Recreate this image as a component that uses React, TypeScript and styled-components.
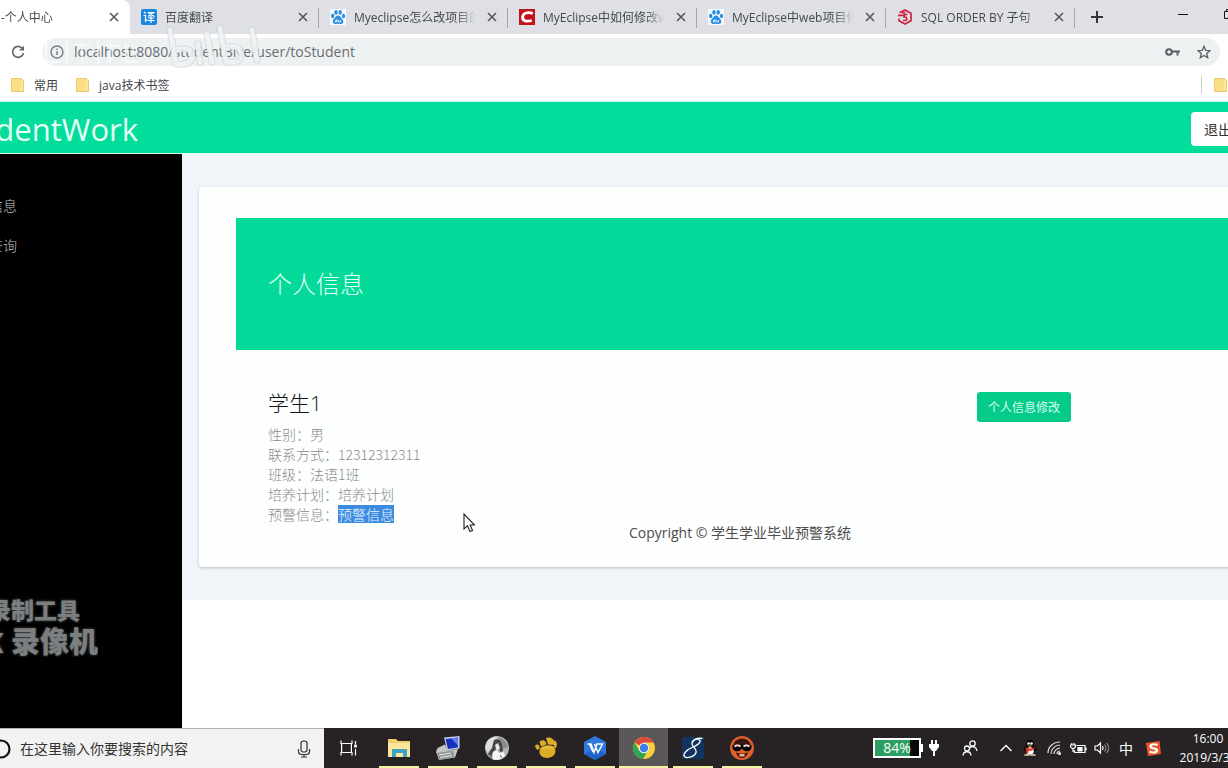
import React from "react";
import styled, { createGlobalStyle } from "styled-components";

const sans = `"Open Sans", "Noto Sans CJK SC", sans-serif`;

const GlobalStyle = createGlobalStyle`
  * { box-sizing: border-box; }
  body { margin: 0; background: #fff; font-family: ${sans}; font-size: 14px; color: #333; }
  button, input { font-family: inherit; }
  a { color: inherit; text-decoration: none; }
  svg { display: block; flex: none; }
`;

const Screen = styled.div`
  position: relative;
  display: flex;
  flex-direction: column;
  min-height: 100vh;
  overflow: hidden;
`;

/* ---------- browser chrome ---------- */

const TabStrip = styled.div`
  display: flex;
  height: 34px;
  background: #dee0e6;
`;

const TabItem = styled.div<{ $active?: boolean }>`
  position: relative;
  display: flex;
  align-items: center;
  gap: 8px;
  flex: none;
  width: ${(p) => (p.$active ? 130 : 189)}px;
  padding: ${(p) => (p.$active ? "0 8px 0 1px" : "0 8px 0 11px")};
  background: ${(p) => (p.$active ? "#fff" : "transparent")};
  border-radius: ${(p) => (p.$active ? "0 8px 0 0" : "0")};
  font-size: 12px;
  color: #45484d;

  &::after {
    content: "";
    position: absolute;
    right: 0;
    top: 8px;
    height: 20px;
    width: 1px;
    background: ${(p) => (p.$active ? "transparent" : "#a3a6ab")};
  }
`;

const TabTitle = styled.span`
  flex: 1;
  min-width: 0;
  overflow: hidden;
  white-space: nowrap;
  mask-image: linear-gradient(to right, #000 calc(100% - 20px), transparent);
`;

const IconButton = styled.button`
  display: flex;
  align-items: center;
  justify-content: center;
  flex: none;
  width: 16px;
  height: 16px;
  padding: 0;
  border: 0;
  background: none;
  color: #55585c;
`;

const NewTab = styled(IconButton)`
  width: 44px;
  height: 34px;
`;

const WindowControls = styled.div`
  display: flex;
  gap: 30px;
  margin-left: auto;
  margin-right: -9px;
  padding-top: 6px;
`;

const AddressRow = styled.div`
  display: flex;
  align-items: center;
  gap: 16px;
  height: 34px;
  padding: 4px 8px 2px 10px;
  margin-bottom: 1px;
`;

const AddressPill = styled.div`
  display: flex;
  align-items: center;
  flex: 1;
  height: 28px;
  padding: 0 8px;
  gap: 16px;
  border-radius: 14px;
  background: #eef1f2;
`;

const AddressField = styled.label`
  display: flex;
  align-items: center;
  flex: 1;
  gap: 10px;
`;

const AddressInput = styled.input`
  flex: 1;
  min-width: 0;
  padding: 0;
  border: 0;
  background: none;
  font-size: 14px;
  line-height: 20px;
  color: #6a6e72;
`;

const BookmarkBar = styled.nav`
  display: flex;
  align-items: center;
  height: 33px;
  padding-left: 11px;
  gap: 18px;
  border-bottom: 1px solid #c9f7f2;
  font-size: 12px;
  color: #3f4246;
`;

const Bookmark = styled.a`
  display: flex;
  align-items: center;
  gap: 10px;
`;

const OtherBookmarks = styled.div`
  display: flex;
  align-items: center;
  height: 18px;
  margin-left: auto;
  margin-right: 1px;
  padding-left: 12px;
  border-left: 1px solid #d0d0c8;
`;

/* ---------- web page ---------- */

const SiteHeader = styled.header`
  display: flex;
  align-items: center;
  justify-content: space-between;
  height: 52px;
  padding-top: 2px;
  background: #02dd9b;
  border-bottom: 1px solid #d8fbef;
  overflow: hidden;
`;

const ClippedLeft = styled.div<{ $width: number }>`
  display: flex;
  justify-content: flex-end;
  width: ${(p) => p.$width}px;
  overflow: hidden;
  white-space: nowrap;
`;

const Brand = styled(ClippedLeft)`
  font-size: 31px;
  font-weight: 500;
  line-height: 48px;
  color: #e4fff6;
`;

const LogoutButton = styled.button`
  flex: none;
  height: 34px;
  margin-right: -17px;
  padding: 0 13px;
  border: 0;
  border-radius: 4px;
  background: #fff;
  font-size: 14px;
  color: #333;
`;

const Body = styled.div`
  display: flex;
  flex: 1;
  align-items: stretch;
`;

const Sidebar = styled.aside`
  position: relative;
  flex: none;
  width: 182px;
  padding-top: 32px;
  background: #000;
`;

const SideLink = styled.a`
  display: block;
  color: #c4c4c4;
  font-size: 14px;
  font-weight: 300;
  line-height: 40px;
`;

const RecorderMark = styled.div`
  position: absolute;
  left: 0;
  top: 441px;
  color: #7b7f80;
  font-weight: 900;
  text-shadow: 0 0 3px #55585a;
`;

const MarkLine = styled(ClippedLeft)<{ $size: number }>`
  font-size: ${(p) => p.$size}px;
  line-height: 31px;
`;

const Main = styled.main`
  flex: 1;
  min-width: 0;
  overflow: hidden;
`;

const Backdrop = styled.div`
  padding: 33px 0 33px 17px;
  background: #f1f4f9;
`;

const Card = styled.section`
  height: 380px;
  margin-right: -53px;
  padding: 31px 37px 24px;
  background: #fdfefe;
  border-radius: 3px;
  box-shadow: 0 1px 3px rgba(0, 0, 0, 0.22);
`;

const Banner = styled.div`
  display: flex;
  align-items: center;
  height: 132px;
  padding: 0 0 4px 32px;
  background: #03da9a;
`;

const BannerTitle = styled.h1`
  margin: 0;
  font-size: 24px;
  font-weight: 300;
  color: #e2fff6;
`;

const Profile = styled.div`
  display: flex;
  justify-content: space-between;
  align-items: flex-start;
  padding: 38px 173px 0 32px;
`;

const Name = styled.h2`
  margin: 0 0 6px;
  font-size: 21px;
  line-height: 30px;
  font-weight: 300;
  color: #111;
`;

const Facts = styled.div`
  font-family: "Liberation Sans Narrow", "Noto Sans CJK SC", sans-serif;
  font-size: 14px;
  font-weight: 300;
  line-height: 20px;
  color: #8b8b8b;
`;

const Fact = styled.div`
  display: flex;
  height: 20px;
`;

const Selected = styled.mark`
  height: 18px;
  margin-top: 1px;
  line-height: 18px;
  background: #3d8be0;
  color: #e6f3ff;
`;

const EditButton = styled.button`
  height: 30px;
  margin-top: 4px;
  padding: 0 11px;
  border: 0;
  border-radius: 3px;
  background: #04cb8a;
  color: #d5fff1;
  font-size: 12px;
`;

const Copyright = styled.footer`
  text-align: center;
  font-size: 14px;
  line-height: 18px;
  color: #4c4c4c;
`;

/* ---------- taskbar ---------- */

const Taskbar = styled.div`
  display: flex;
  height: 40px;
  background: #272325;
  color: #fff;
`;

const SearchBox = styled.label`
  display: flex;
  align-items: center;
  flex: none;
  width: 324px;
  padding: 0 13px 0 0;
  gap: 9px;
  border-top: 1px solid #b3b3b3;
  background: #f2f2f2;
  color: #222;
`;

const SearchInput = styled.input`
  flex: 1;
  min-width: 0;
  padding: 0;
  border: 0;
  background: none;
  font-size: 14px;
  &::placeholder { color: #333; opacity: 1; }
`;

const TaskButton = styled.button<{ $open?: boolean; $active?: boolean }>`
  position: relative;
  display: flex;
  align-items: center;
  justify-content: center;
  flex: none;
  width: 49px;
  padding: 0;
  border: 0;
  background: ${(p) => (p.$active ? "#5a5759" : "transparent")};

  &::after {
    content: "";
    position: absolute;
    left: ${(p) => (p.$active ? 0 : 5)}px;
    right: ${(p) => (p.$active ? 0 : 4)}px;
    bottom: 0;
    height: 2px;
    background: ${(p) => (p.$open ? "#f5f2a8" : "transparent")};
  }
`;

const AppButtons = styled.div`
  display: flex;
  margin-left: 1px;
`;

const Tray = styled.div`
  display: flex;
  align-items: center;
  margin-left: auto;
  margin-right: -9px;
`;

const TrayCell = styled.div<{ $width?: number }>`
  display: flex;
  justify-content: center;
  flex: none;
  width: ${(p) => p.$width ?? 24}px;
  font-size: 14px;
`;

const Battery = styled.div`
  position: relative;
  width: 48px;
  height: 20px;
  margin-right: 1px;
  border: 2px solid #fff;
  background: linear-gradient(to right, #2b9f63 80%, #0a0a0a 80%);
  font-size: 14px;
  line-height: 16px;
  text-align: center;

  &::after {
    content: "";
    position: absolute;
    right: -4px;
    top: 4px;
    width: 2px;
    height: 8px;
    background: #fff;
  }
`;

const Clock = styled.div`
  width: 58px;
  margin-left: 11px;
  font-size: 12px;
  line-height: 19px;
  text-align: center;
  white-space: nowrap;
`;

/* ---------- overlays ---------- */

const StreamMark = styled.svg`
  position: absolute;
  left: 0;
  top: 22px;
  pointer-events: none;
`;

const Pointer = styled.svg`
  position: absolute;
  left: 463px;
  top: 513px;
  pointer-events: none;
`;

/* ---------- icons ---------- */

const CloseIcon = () => (
  <svg width="10" height="10" viewBox="0 0 10 10" stroke="currentColor" strokeWidth="1.6">
    <path d="M1 1l8 8M9 1L1 9" />
  </svg>
);

const TranslateIcon = () => (
  <svg width="16" height="16" viewBox="0 0 16 16">
    <rect width="16" height="16" rx="2" fill="#1787e0" />
    <g stroke="#fff" strokeWidth="1.2" fill="none">
      <path d="M3 3l1.5 1.5M2.5 6.5H4.500V12L6 10.500M6.500 3.500H12.500L7 7.500M7.500 4L13.500 7.500M7 9H13M6.500 11.500H13.500M10 7V14" />
    </g>
  </svg>
);

const PawIcon = () => (
  <svg width="16" height="16" viewBox="0 0 16 16">
    <rect width="16" height="16" fill="#f6faff" />
    <g fill="#2a8fe0">
      <ellipse cx="2.700" cy="7" rx="1.700" ry="2.200" />
      <ellipse cx="6" cy="3.400" rx="1.700" ry="2.300" />
      <ellipse cx="10.200" cy="3.400" rx="1.700" ry="2.300" />
      <ellipse cx="13.500" cy="7" rx="1.600" ry="2.200" />
      <path d="M8 6.600c-2 0-2.500 2-4 3.200-2 1.600-1.500 5.200 1.200 5.200 1.100 0 1.800-.3 2.800-.3s1.800.3 3 .3c2.700 0 3-3.500 1.200-5C10.600 8.700 10 6.600 8 6.600z" />
    </g>
    <path d="M7 10v3H5.500v-1.500H7M8.700 11v2h1.800v-2" stroke="#fff" fill="none" strokeWidth=".8" />
  </svg>
);

const CsdnIcon = () => (
  <svg width="16" height="16" viewBox="0 0 16 16">
    <rect width="16" height="16" fill="#c4141b" />
    <path d="M13.800 4.300C9 3 4 3.500 3.600 8s4.400 4.500 9.200 3.500" stroke="#fff" strokeWidth="2.800" fill="none" />
  </svg>
);

const HexIcon = () => (
  <svg width="16" height="16" viewBox="0 0 16 16" fill="none" stroke="#cc2440" strokeWidth="1.700">
    <path d="M2.500 3.800L8 1l6 3.200v7.600L8 15l-6-3.200V9.500" />
    <path d="M1 6.300h5.500M5 3.800l3.500-.3M10.500 5.500H7.500L7 8h1.500a1.800 1.800 0 010 3.500H6" />
  </svg>
);

const FolderIcon = () => (
  <svg width="13" height="14" viewBox="0 0 13 14">
    <path d="M.5.5h10V2h2v11.500H.5z" fill="#fbdf84" stroke="#ecc870" />
    <path d="M11 2v10" stroke="#fff2b8" />
  </svg>
);

const TaskViewIcon = () => (
  <svg width="17" height="16" viewBox="0 0 17 16" fill="none" stroke="#fff" strokeWidth="1.200">
    <path d="M1 .5v3h11v-3M1 15.500v-3h11v3M1.600 3.500v9M11.400 3.500v9M15.500 1v3M15.500 9v6.500" />
    <path d="M15.500 4.500v3" strokeWidth="2.600" />
  </svg>
);

const ExplorerIcon = () => (
  <svg width="22" height="20" viewBox="0 0 22 20">
    <path d="M0 1h8l2 2h12v16H0z" fill="#f1cf6d" />
    <path d="M0 5h22v14H0z" fill="#fce69c" />
    <path d="M4 11h15v8h-4v-4H8v4H4z" fill="#3ca2c6" />
  </svg>
);

const ComputerIcon = () => (
  <svg width="24" height="24" viewBox="0 0 24 24">
    <path d="M8 1.500L23.500 0v12.500L11 14.500z" fill="#c9d2e4" />
    <path d="M9.500 3L22 1.500v10L12 13z" fill="#1531bd" />
    <path d="M15 2.300l7-.8v8z" fill="#5d80ee" />
    <path d="M1.500 12L9 8.500l2.500 6L22 13l-3 8.500L3 24 0 16z" fill="#c3c5c7" />
    <path d="M1 17l16-2.500 1.500 6.500L3 23.500z" fill="#909496" />
    <path d="M3 19l12-2M4 21.500l12-2" stroke="#e6e8ea" />
  </svg>
);

const PortraitIcon = () => (
  <svg width="24" height="24" viewBox="0 0 24 24">
    <circle cx="12" cy="12" r="12" fill="#b4b4b4" />
    <path d="M1 8C3 2 9 0 13 1L9 5 7 12l-4 4C1 15 0 11 1 8z" fill="#dedede" />
    <path d="M13 1c5 1 9 5 10 10l-5 2-2-7z" fill="#8b8b8b" />
    <path d="M9 4c4-2 7 0 8 4l1 7-3 1-1-5-2-3-1 5-3 3-2 5-3-3 4-6z" fill="#454545" />
    <path d="M10 9l3-2 2 5-2 2-2-1z" fill="#e9e9e9" />
    <path d="M8 16l4-2 2 3 5-1 1 4c-4 4-9 5-13 3z" fill="#f4f4f4" />
    <path d="M3 18l3 1 1 4M15 19l2 3" stroke="#666" fill="none" />
  </svg>
);

const NuggetIcon = () => (
  <svg width="22" height="22" viewBox="0 0 22 22">
    <g fill="#dcae28">
      <path d="M5 12c2-4.500 14-5 15-.5 2 6-3 9.500-8 9.500S3 17.500 5 12z" />
      <path d="M4.500 4.500C8 2 11 3 11.500 7.500L6 9.500zM11 1c5-1.500 9 1 8.500 7L13 7.500zM0 8.500c3-2 5-.5 4.500 3L3 13C1 12 .5 10.500 0 8.500zM19.500 3c3 2 3 6 1 8.500l-1.500-2z" />
    </g>
    <path d="M7 12c3-2 7-2.500 11-1" stroke="#f0cc58" fill="none" />
  </svg>
);

const WpsIcon = () => (
  <svg width="22" height="24" viewBox="0 0 22 24">
    <path d="M11 0l11 6v12l-11 6-11-6V6z" fill="#2f78dd" />
    <path d="M0 18l11-6 11 6-11 6z" fill="#1f62c8" />
    <path d="M3.500 8H7l3 8.500L13 8h5.500L14 16.500 10.500 8M5.500 8L9 16" fill="none" stroke="#fff" strokeWidth="1.500" />
  </svg>
);

const ChromeIcon = () => (
  <svg width="22" height="22" viewBox="0 0 22 22">
    <circle cx="11" cy="11" r="11" fill="#f8cf3c" />
    <path d="M11 11L1.500 5.500A11 11 0 0120.500 5.500H11z" fill="#dd4a3b" />
    <path d="M1.500 5.500A11 11 0 0010 22l5-8.500L11 11 6.200 13.700z" fill="#31a452" />
    <circle cx="11" cy="11" r="5.200" fill="#f2f2f2" />
    <circle cx="11" cy="11" r="4.200" fill="#3c7ee8" />
  </svg>
);

const ScriptIcon = () => (
  <svg width="22" height="22" viewBox="0 0 22 22">
    <rect width="22" height="22" fill="#12355f" />
    <path d="M20.500 1.500C15 .5 9.500 3 10 7c.5 3 5 4.500 4 8.500S5 22 2.500 19.500 6 12 11 10s8.500-5 6.500-7-6-.5-7 2.500" fill="none" stroke="#fff" strokeWidth="1.300" />
  </svg>
);

const MaskIcon = () => (
  <svg width="24" height="24" viewBox="0 0 24 24">
    <circle cx="12" cy="12" r="12" fill="#e0602a" />
    <path d="M4 7c3-6 13-6 16 0l1 4H3z" fill="#3a1511" />
    <path d="M2.500 9h19v3c-1 4-7 4.500-9 1h-1c-2 3.500-8 3-9-1z" fill="#0b0808" />
    <path d="M4.500 10.500c2-1.500 4-1.500 6 0M13.500 10.500c2-1.500 4-1.500 6 0" stroke="#f7ece2" strokeWidth="1.600" fill="none" />
    <path d="M6 16c3 2 9 2 12 0-1 4-3 6-6 6s-5-2-6-6z" fill="#41160e" />
    <path d="M9.500 18h5v2.500h-5z" fill="#f0b08a" />
  </svg>
);

const PlugIcon = () => (
  <svg width="10" height="16" viewBox="0 0 10 16" fill="#fff">
    <path d="M2 0h2v4h2V0h2v4h2v3L7 11H6v5H4v-5H3L0 7V4h2z" />
  </svg>
);

const PeopleIcon = () => (
  <svg width="16" height="16" viewBox="0 0 16 16" fill="none" stroke="#fff" strokeWidth="1.300">
    <circle cx="10.500" cy="3.500" r="2.700" />
    <path d="M7.500 8c3-3 7-1 7.500 3" />
    <circle cx="5" cy="8.500" r="2.500" />
    <path d="M1 15.500c.5-5 7.500-5 8 0" />
  </svg>
);

const PenguinIcon = () => (
  <svg width="14" height="16" viewBox="0 0 14 16">
    <path d="M7 0c3 0 4 2 4 5l3 5-2 1-2 4H4l-2-4-2-1 3-5c0-3 1-5 4-5z" fill="#080808" />
    <ellipse cx="7" cy="11" rx="3.800" ry="3.800" fill="#fff" />
    <circle cx="5.500" cy="3.500" r="1.300" fill="#fff" />
    <circle cx="8.500" cy="3.500" r="1.300" fill="#fff" />
    <path d="M4.500 5.500h5L7 7z" fill="#f2a21b" />
    <path d="M2.500 7c3 2 6 2 9 0v2c-3 2-5 2-6 1.500V13H3z" fill="#df2824" />
    <path d="M1.500 15h5M7.500 15h5" stroke="#f2d9b0" strokeWidth="1.500" />
  </svg>
);

const WifiIcon = () => (
  <svg width="14" height="14" viewBox="0 0 14 14" fill="none" stroke="#ddd" strokeWidth="1.200">
    <path d="M1 12C1 6 6 1 13 1M4 13c0-5 4-9 9-9M7 13c0-3 3-6 6-6M10 13c0-2 1-3 3-3" />
    <circle cx="12.500" cy="12.500" r="1" fill="#fff" />
  </svg>
);

const ChargeIcon = () => (
  <svg width="17" height="13" viewBox="0 0 17 13" fill="none" stroke="#fff" strokeWidth="1.200">
    <path d="M6.500 3.500H15v7H4.500V8M16 5.500v3M.5 3h5v2L3 7 .5 5zM1.800 1v2M4.200 1v2M3 7v3" />
    <path d="M8 5.500h4v3.500H8z" fill="#fff" />
  </svg>
);

const VolumeIcon = () => (
  <svg width="16" height="14" viewBox="0 0 16 14" fill="none" stroke="#fff" strokeWidth="1.200">
    <path d="M1 5h2.500L6.500 2v10L3.500 9H1zM8.500 5c1 1.500 1 2.500 0 4" />
    <path d="M10.500 3.500c2 2.500 2 4.500 0 7M12.500 2c3 3 3 7 0 10" stroke="#8a8a8a" />
  </svg>
);

const SogouIcon = () => (
  <svg width="17" height="17" viewBox="0 0 17 17">
    <path d="M1 3l13.500-2L16 14 3 16z" fill="#e9582b" />
    <path d="M12.500 5C9 3.500 5 4.500 5.500 6.700s6.500 1 6.500 3.600-4.500 2.700-7.500 1.200" fill="none" stroke="#fff" strokeWidth="2.200" />
  </svg>
);

const tabs = [
  { title: "百度翻译", icon: <TranslateIcon /> },
  { title: "Myeclipse怎么改项目的", icon: <PawIcon /> },
  { title: "MyEclipse中如何修改w", icon: <CsdnIcon /> },
  { title: "MyEclipse中web项目修", icon: <PawIcon /> },
  { title: "SQL ORDER BY 子句", icon: <HexIcon /> },
];

const facts = [
  { label: "性别：", value: "男" },
  { label: "联系方式：", value: "12312312311" },
  { label: "班级：", value: "法语1班" },
  { label: "培养计划：", value: "培养计划" },
  { label: "预警信息：", value: "预警信息", selected: true },
];

const apps = [
  { name: "文件资源管理器", icon: <ExplorerIcon /> },
  { name: "计算机", icon: <ComputerIcon /> },
  { name: "头像", icon: <PortraitIcon /> },
  { name: "工具", icon: <NuggetIcon /> },
  { name: "WPS", icon: <WpsIcon /> },
  { name: "Chrome", icon: <ChromeIcon />, active: true },
  { name: "编辑器", icon: <ScriptIcon /> },
  { name: "录像机", icon: <MaskIcon /> },
];

const logoStrokes =
  "M170 8l6 34q16 2 16-8t-15-6M198 22l2 18M207 12l5 28M220 6l6 34q16 2 15-8t-15-6M252 8l5 30";

export default function App() {
  return (
    <Screen>
      <GlobalStyle />
      <TabStrip>
        <TabItem $active>
          <TabTitle>-个人中心</TabTitle>
          <IconButton aria-label="关闭"><CloseIcon /></IconButton>
        </TabItem>
        {tabs.map((tab) => (
          <TabItem key={tab.title}>
            {tab.icon}
            <TabTitle>{tab.title}</TabTitle>
            <IconButton aria-label="关闭"><CloseIcon /></IconButton>
          </TabItem>
        ))}
        <NewTab aria-label="新标签页">
          <svg width="12" height="12" viewBox="0 0 12 12" stroke="#333" strokeWidth="2">
            <path d="M6 0v12M0 6h12" />
          </svg>
        </NewTab>
        <WindowControls>
          <IconButton aria-label="最小化">
            <svg width="10" height="10" viewBox="0 0 10 10" stroke="#111"><path d="M0 5.500h10" /></svg>
          </IconButton>
          <IconButton aria-label="还原">
            <svg width="10" height="10" viewBox="0 0 10 10" stroke="#111" fill="none"><path d="M.5 2.500h7v7h-7zM2.500 2V.5h7v7H8" /></svg>
          </IconButton>
        </WindowControls>
      </TabStrip>

      <AddressRow>
        <IconButton aria-label="刷新">
          <svg width="14" height="14" viewBox="0 0 14 14" fill="none" stroke="#66696d" strokeWidth="1.700">
            <path d="M11.500 3.500A5.500 5.500 0 1012.500 8" />
            <path d="M8 5.500h5V.8z" fill="#66696d" stroke="none" />
          </svg>
        </IconButton>
        <AddressPill>
          <AddressField>
            <svg width="14" height="14" viewBox="0 0 14 14" fill="none" stroke="#7b7e82" strokeWidth="1.400">
              <circle cx="7" cy="7" r="6" />
              <path d="M7 6v4M7 3.500V5" />
            </svg>
            <AddressInput aria-label="地址" defaultValue="localhost:8080/studentBiye/user/toStudent" />
          </AddressField>
          <IconButton aria-label="密码">
            <svg width="15" height="8" viewBox="0 0 15 8" fill="none" stroke="#5b5e62" strokeWidth="2">
              <circle cx="4" cy="4" r="2.800" />
              <path d="M7 3.500h8M12.500 3.500V7.500" />
            </svg>
          </IconButton>
          <IconButton aria-label="收藏">
            <svg width="14" height="14" viewBox="0 0 14 14" fill="none" stroke="#5b5e62" strokeWidth="1.300">
              <path d="M7 1.300l1.700 4 4.300.4-3.300 2.800 1 4.200L7 10.400l-3.700 2.300 1-4.200L1 5.700l4.300-.4z" />
            </svg>
          </IconButton>
        </AddressPill>
      </AddressRow>

      <BookmarkBar>
        <Bookmark href="#"><FolderIcon />常用</Bookmark>
        <Bookmark href="#"><FolderIcon />java技术书签</Bookmark>
        <OtherBookmarks><FolderIcon /></OtherBookmarks>
      </BookmarkBar>

      <SiteHeader>
        <Brand $width={138}>dentWork</Brand>
        <LogoutButton>退出</LogoutButton>
      </SiteHeader>

      <Body>
        <Sidebar>
          <SideLink href="#"><ClippedLeft $width={17}>信息</ClippedLeft></SideLink>
          <SideLink href="#"><ClippedLeft $width={17}>查询</ClippedLeft></SideLink>
          <RecorderMark>
            <MarkLine $width={80} $size={23}>录制工具</MarkLine>
            <MarkLine $width={98} $size={29}>K 录像机</MarkLine>
          </RecorderMark>
        </Sidebar>
        <Main>
          <Backdrop>
            <Card>
              <Banner><BannerTitle>个人信息</BannerTitle></Banner>
              <Profile>
                <div>
                  <Name>学生1</Name>
                  <Facts>
                    {facts.map((f) => (
                      <Fact key={f.label}>
                        <span>{f.label}</span>
                        {f.selected ? <Selected>{f.value}</Selected> : <span>{f.value}</span>}
                      </Fact>
                    ))}
                  </Facts>
                </div>
                <EditButton>个人信息修改</EditButton>
              </Profile>
              <Copyright>Copyright © 学生学业毕业预警系统</Copyright>
            </Card>
          </Backdrop>
        </Main>
      </Body>

      <Taskbar>
        <SearchBox>
          <svg width="11" height="20" viewBox="0 0 11 20" fill="none" stroke="#111" strokeWidth="2.200">
            <circle cx="1" cy="10" r="8.500" />
          </svg>
          <SearchInput aria-label="搜索" placeholder="在这里输入你要搜索的内容" />
          <svg width="14" height="18" viewBox="0 0 14 18" fill="none" stroke="#333" strokeWidth="1.200">
            <rect x="4" y="1" width="6" height="11" rx="2.500" />
            <path d="M1.500 9v2.500q0 3 3 3h5q3 0 3-3V9M7 14.500V17M4 17h6" />
          </svg>
        </SearchBox>
        <TaskButton aria-label="任务视图"><TaskViewIcon /></TaskButton>
        <AppButtons>
          {apps.map((a) => (
            <TaskButton key={a.name} aria-label={a.name} $open $active={a.active}>{a.icon}</TaskButton>
          ))}
        </AppButtons>
        <Tray>
          <Battery>84%</Battery>
          <TrayCell><PlugIcon /></TrayCell>
          <TrayCell $width={48}><PeopleIcon /></TrayCell>
          <TrayCell>
            <svg width="12" height="8" viewBox="0 0 12 8" fill="none" stroke="#fff" strokeWidth="1.400"><path d="M.5 7L6 1.500 11.500 7" /></svg>
          </TrayCell>
          <TrayCell><PenguinIcon /></TrayCell>
          <TrayCell><WifiIcon /></TrayCell>
          <TrayCell><ChargeIcon /></TrayCell>
          <TrayCell><VolumeIcon /></TrayCell>
          <TrayCell>中</TrayCell>
          <TrayCell $width={30}><SogouIcon /></TrayCell>
          <Clock>16:00<br />2019/3/31</Clock>
        </Tray>
      </Taskbar>

      <StreamMark width="280" height="50" viewBox="0 0 280 50" fill="none" strokeLinecap="round" strokeLinejoin="round">
        <path d={logoStrokes} stroke="#c4c7cc" strokeOpacity=".5" strokeWidth="7" />
        <path d={logoStrokes} stroke="#f4f6f8" strokeOpacity=".8" strokeWidth="5" />
        <path
          d="M4 22h10M9 20v20M28 20v18M34 22l-4 16M46 20v20h14M67 19v22M74 23h16M82 21v19M98 20v22M104 24h14M110 20v20M126 22v18h12"
          stroke="#fff"
          strokeOpacity=".6"
          strokeWidth="2"
        />
      </StreamMark>

      <Pointer width="12" height="20" viewBox="0 0 12 20">
        <path d="M1 1v15l3.500-3.300L7 18.500l2.500-1-2.300-5.500H11.500z" fill="#fff" stroke="#222" strokeWidth="1.100" />
      </Pointer>
    </Screen>
  );
}
